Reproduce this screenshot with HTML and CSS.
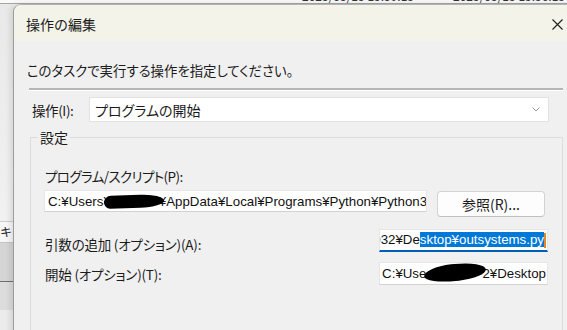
FILE: index.html
```html
<!DOCTYPE html>
<html lang="ja">
<head>
    <meta charset="UTF-8">
    <meta name="viewport" content="width=device-width, initial-scale=1.0">
    <title>操作の編集</title>
    <link rel="stylesheet" href="styles.css">
</head>
<body>

<div class="backwin">
    <div class="bw-top">
        <div class="bw-top-row">
            <span class="bw-cell bw-c0"></span>
            <span class="bw-cell bw-c1">2025/05/13 13:59:13</span>
            <span class="bw-cell bw-c2">2025/05/13 13:56:13</span>
        </div>
    </div>
    <div class="bw-side">
        <div class="bw-r1"></div>
        <div class="bw-r2">キー</div>
        <div class="bw-r3"></div>
        <div class="bw-r4"></div>
        <div class="bw-r5"></div>
    </div>
</div>

<div class="dialog">
    <div class="titlebar">
        <span class="title">操作の編集</span>
        <svg class="close" width="11" height="11" viewBox="0 0 11 11">
            <path d="M0.5 0.5 L10.5 10.5 M10.5 0.5 L0.5 10.5" stroke="#1f1f1f" stroke-width="1.1" fill="none"/>
        </svg>
    </div>

    <div class="dlg-body">
        <p class="intro">このタスクで実行する操作を指定してください。</p>
        <div class="sep"></div>

        <div class="action-row">
            <span class="action-label">操作(I):</span>
            <div class="combo">
                <span>プログラムの開始</span>
                <svg class="chevron" width="8" height="5" viewBox="0 0 8 5">
                    <path d="M0.5 0.5 L4 4 L7.5 0.5" stroke="#9a9a9a" stroke-width="1" fill="none"/>
                </svg>
            </div>
        </div>

        <fieldset class="group">
            <legend>設定</legend>

            <div class="prog-label">プログラム/スクリプト(P):</div>
            <div class="prog-row">
                <div class="field field-prog">
                    <span class="path">C:¥Users¥<span class="redact redact-prog"></span>¥AppData¥Local¥Programs¥Python¥Python313¥python.exe</span>
                </div>
                <button class="btn">参照(R)...</button>
            </div>

            <div class="opt-row">
                <span class="opt-label opt-label-args">引数の追加 (オプション)(A):</span>
                <div class="field field-end focused">
                    <span class="path">C:¥Users¥user¥OneDrive¥2032¥De<span class="sel">sktop¥outsystems.py</span><span class="caret"></span></span>
                </div>
            </div>

            <div class="opt-row">
                <span class="opt-label opt-label-start">開始 (オプション)(T):</span>
                <div class="field field-end">
                    <span class="path">C:¥Use<span class="redact redact-start"></span>2¥Desktop</span>
                </div>
            </div>
        </fieldset>
    </div>
</div>

</body>
</html>
```

FILE: styles.css
```css
* {
    box-sizing: border-box;
}
body {
    margin: 0;
    width: 567px;
    height: 330px;
    overflow: hidden;
    position: relative;
    background: #f0f0f0;
    font-family: "Noto Sans CJK JP", sans-serif;
    color: #1b1b1b;
}

/* window behind the dialog */
.backwin {
    width: 567px;
    height: 330px;
    display: flex;
    flex-direction: column;
}
.bw-top {
    height: 4px;
    overflow: hidden;
    background: #fafafa;
    border-bottom: 1px solid #a6a6a6;
}
.bw-top-row {
    display: flex;
    margin-top: -11px;
    font-size: 12px;
    line-height: 14px;
    color: #333;
}
.bw-c0 {
    width: 302px;
}
.bw-c1 {
    width: 151px;
}
.bw-side {
    width: 13px;
    flex: 1;
    display: flex;
    flex-direction: column;
}
.bw-r1 {
    height: 218px;
    background: linear-gradient(#e9e9e9, #f1f1f1);
    border-bottom: 1px solid #cdcdcd;
}
.bw-r2 {
    height: 21px;
    background: #f7f7f7;
    border-bottom: 1px solid #c6c6c6;
    font-size: 12px;
    line-height: 20px;
    white-space: nowrap;
    overflow: hidden;
    color: #222;
}
.bw-r3 {
    height: 39px;
    background: #d5d5d5;
    border-bottom: 1px solid #707070;
}
.bw-r4 {
    height: 28px;
    background: #dcdcdc;
}
.bw-r5 {
    flex: 1;
    background: #ebebeb;
}

/* dialog */
.dialog {
    position: absolute;
    left: 13px;
    top: 4px;
    width: 570px;
    height: 340px;
    background: #f0f0f0;
    border-left: 1px solid #9c9c9c;
    border-top: 1px solid #b4b4b4;
    border-radius: 8px 0 0 0;
    box-shadow: -2px 0 6px rgba(0, 0, 0, 0.12);
    overflow: hidden;
}
.titlebar {
    height: 36px;
    background: #f3f3e9;
    display: flex;
    align-items: center;
    padding: 0 20px 0 12px;
}
.title {
    font-size: 14px;
    line-height: 20px;
    padding-top: 1px;
}
.close {
    margin-left: auto;
    margin-top: 3px;
}
.dlg-body {
    padding: 19px 0 0 13px;
}
.intro {
    margin: 0;
    font-size: 13.4px;
    line-height: 20px;
    font-feature-settings: "palt";
}
.sep {
    margin: 8px 0 0 2px;
    width: 534px;
    height: 3px;
    border-top: 2px solid #b6b6b6;
    border-bottom: 1px solid #ffffff;
}
.action-row {
    display: flex;
    margin-top: 6px;
    height: 25px;
    align-items: center;
}
.action-label {
    width: 62px;
    padding-left: 5px;
    font-size: 13.5px;
    line-height: 20px;
    font-feature-settings: "palt";
    letter-spacing: -0.4px;
}
.combo {
    width: 460px;
    height: 25px;
    background: #fff;
    border: 1px solid #e2e2e2;
    display: flex;
    align-items: center;
    padding: 0 8px 0 5px;
    font-size: 14px;
    line-height: 20px;
    font-feature-settings: "palt";
}
.chevron {
    margin-left: auto;
}

/* settings group */
.group {
    margin: 5px 0 0 3px;
    width: 533px;
    height: 260px;
    border: 1px solid #dcdcdc;
    padding: 0 15px 0 14px;
    min-width: 0;
}
.group legend {
    margin-left: -7px;
    padding: 0 2px;
    font-size: 14px;
    line-height: 20px;
}
.prog-label {
    margin-top: 19px;
    font-size: 13.5px;
    line-height: 20px;
    font-feature-settings: "palt";
    letter-spacing: -0.6px;
}
.prog-row {
    display: flex;
    align-items: flex-start;
    margin-top: 4px;
}
.field {
    height: 22px;
    background: #fff;
    border: 1px solid #e6e6e6;
    border-bottom-color: #d2d2d2;
    display: flex;
    align-items: center;
    overflow: hidden;
    white-space: nowrap;
    font-family: "Liberation Sans", "Noto Sans CJK JP", sans-serif;
    font-size: 13.3px;
    color: #111;
}
.field-prog {
    width: 383px;
    margin-left: -1px;
    padding-left: 3px;
}
.field-prog .path {
    min-width: 0;
    overflow: hidden;
}
.btn {
    width: 108px;
    height: 26px;
    margin: 1px 0 0 10px;
    background: #fdfdfd;
    border: 1px solid #d3d3d3;
    border-bottom-color: #c0c0c0;
    border-radius: 4px;
    font-family: "Noto Sans CJK JP", sans-serif;
    font-size: 14px;
    line-height: 20px;
    color: #1b1b1b;
    padding: 0;
}
.opt-row {
    display: grid;
    grid-template-columns: 334px 169px;
    align-items: start;
    margin-top: 12px;
}
.opt-row + .opt-row {
    margin-top: 8px;
}
.opt-label {
    font-size: 13.5px;
    line-height: 20px;
    font-feature-settings: "palt";
    letter-spacing: -0.2px;
}
.opt-label-args {
    padding-top: 5px;
}
.opt-label-start {
    padding-top: 2px;
}
.field-end {
    height: 23px;
    justify-content: flex-end;
    padding-right: 1px;
}
.focused {
    border-bottom: 2px solid #005fb8;
}
.sel {
    display: inline-block;
    background: #0078d7;
    color: #fff;
    line-height: 15px;
}
.caret {
    display: inline-block;
    width: 2px;
    height: 15px;
    background: #e08a2c;
    vertical-align: middle;
}
.redact {
    display: inline-block;
    background: #000;
    vertical-align: middle;
}
.redact-prog {
    width: 60px;
    height: 13px;
    margin: 0 -5px 0 -7px;
    border-radius: 7px 40% 40% 6px / 50%;
    transform: rotate(-2deg);
}
.redact-start {
    width: 62px;
    height: 17px;
    margin: -2px -4px 0 -2px;
    border-radius: 45% 50% 45% 50% / 55% 50% 50% 45%;
    transform: rotate(-6deg);
}
```
